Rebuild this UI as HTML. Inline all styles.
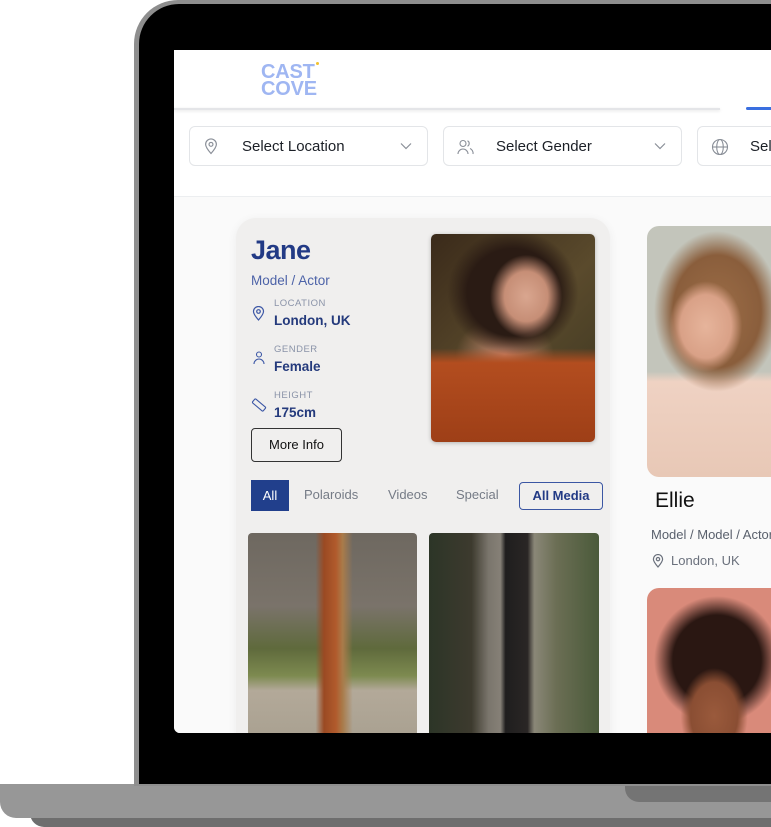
<!DOCTYPE html>
<html><head><meta charset="utf-8"><style>
*{margin:0;padding:0;box-sizing:border-box}
body{width:771px;height:827px;overflow:hidden;background:#fff;position:relative;font-family:"Liberation Sans",Arial,sans-serif}
.a{position:absolute}
.sel{position:absolute;top:126px;height:40px;border:1px solid #e3e5e8;border-radius:6px;background:#fff;font-size:15px;color:#1b1f26}
.sel span{position:absolute;left:52px;top:11px}
.sel svg{position:absolute}
.lbl{font-size:9.5px;color:#8a93a8;letter-spacing:.5px}
.val{font-size:13.5px;color:#243a7c;font-weight:bold}
.tab{position:absolute;top:437px;font-size:13px;color:#757b86}
</style></head><body>
<div class="a" style="left:30px;top:805px;width:741px;height:22px;background:#6e6e6e;border-radius:0 0 0 14px"></div>
<div class="a" style="left:0;top:784px;width:771px;height:34px;background:#979797;border-radius:0 0 0 16px"></div>
<div class="a" style="left:625px;top:784px;width:146px;height:18px;background:#747474;border-radius:0 0 0 14px"></div>
<div class="a" style="left:134px;top:0;width:660px;height:786px;background:#8e8e8e;border-radius:44px 0 0 0"></div>
<div class="a" style="left:139px;top:4px;width:650px;height:780px;background:#000;border-radius:40px 0 0 0"></div>
<div class="a" style="left:174px;top:50px;width:597px;height:683px;background:#fff;overflow:hidden;border-radius:0 0 0 6px">
  <div class="a" style="left:0;top:58px;width:546px;height:2px;background:#e4e5e8;box-shadow:0 1px 3px rgba(0,0,0,.12)"></div>
  <div class="a" style="left:572px;top:57px;width:30px;height:3px;background:#3a6fe0;border-radius:2px"></div>
  <div class="a" style="left:87px;top:14px;font-size:20px;font-weight:bold;line-height:17px;color:#9fb6f2;letter-spacing:-.2px">CAST<br>COVE</div>
  <div class="a" style="left:142px;top:12px;width:3px;height:3px;background:#f2c12e;border-radius:50%"></div>
  <div class="a" style="left:0;top:146px;width:597px;height:1px;background:#eceef0"></div>
  <div class="a" style="left:0;top:147px;width:597px;height:540px;background:#fafafa"></div>
  <div class="a" style="left:62px;top:168px;width:374px;height:540px;background:#f0efee;border-radius:20px;box-shadow:0 2px 10px rgba(0,0,0,.06)"></div>
  <div class="a" style="left:77px;top:185px;font-size:27px;font-weight:bold;color:#223a85;letter-spacing:-.5px">Jane</div>
  <div class="a" style="left:77px;top:223px;font-size:13.5px;color:#4d63a8">Model / Actor</div>
  <svg class="a" style="left:78px;top:256px" width="13" height="15" viewBox="0 0 13 15"><path d="M6.5 14C3 10 1.5 7.5 1.5 5.5a5 5 0 0 1 10 0c0 2-1.5 4.5-5 8.5z" fill="none" stroke="#3d58a6" stroke-width="1.2"/><circle cx="6.5" cy="5.5" r="1.8" fill="none" stroke="#3d58a6" stroke-width="1.2"/></svg>
  <div class="a lbl" style="left:100px;top:248px">LOCATION</div>
  <div class="a val" style="left:100px;top:263px">London, UK</div>
  <svg class="a" style="left:79px;top:301px" width="12" height="14" viewBox="0 0 12 14"><circle cx="6" cy="3.5" r="2.5" fill="none" stroke="#3d58a6" stroke-width="1.1"/><path d="M1 13a5 5 0 0 1 10 0" fill="none" stroke="#3d58a6" stroke-width="1.1"/></svg>
  <div class="a lbl" style="left:100px;top:294px">GENDER</div>
  <div class="a val" style="left:100px;top:309px">Female</div>
  <svg class="a" style="left:77px;top:347px" width="16" height="16" viewBox="0 0 16 16"><rect x="1" y="5.5" width="14" height="5" rx="1" transform="rotate(40 8 8)" fill="none" stroke="#3d58a6" stroke-width="1.1"/></svg>
  <div class="a lbl" style="left:100px;top:340px">HEIGHT</div>
  <div class="a val" style="left:100px;top:355px">175cm</div>
  <div class="a" style="left:77px;top:378px;width:91px;height:34px;border:1.3px solid #333;border-radius:4px;font-size:13px;color:#111;text-align:center;line-height:31px">More Info</div>
  <div class="a" style="left:257px;top:184px;width:164px;height:208px;border-radius:5px;background:radial-gradient(ellipse 22% 20% at 58% 30%,#d9a68f 0,#c68e76 60%,transparent 100%),radial-gradient(ellipse 40% 30% at 50% 28%,#2a1b14 0,#2a1b14 70%,transparent 100%),linear-gradient(180deg,transparent 55%,#b34d1f 62%,#9e3f17 100%),radial-gradient(ellipse 30% 18% at 45% 58%,#c88b73 0,transparent 100%),linear-gradient(135deg,#3a2a1a,#5a4a2c 50%,#3a3520);box-shadow:0 1px 4px rgba(0,0,0,.25)"></div>
  <div class="a" style="left:77px;top:430px;width:38px;height:31px;background:#213f8c;color:#fff;font-size:13px;text-align:center;line-height:31px">All</div>
  <div class="tab" style="left:130px">Polaroids</div>
  <div class="tab" style="left:214px">Videos</div>
  <div class="tab" style="left:282px">Special</div>
  <div class="a" style="left:345px;top:432px;width:84px;height:28px;border:1.3px solid #3b56a3;border-radius:4px;color:#223a85;font-weight:bold;font-size:13px;text-align:center;line-height:25px">All Media</div>
  <div class="a" style="left:74px;top:483px;width:169px;height:210px;border-radius:4px;background:linear-gradient(90deg,transparent 40%,#9a4a23 45%,#b15a2c 52%,#a97b4a 56%,transparent 62%),linear-gradient(180deg,#6e6860 0,#7a736a 35%,#5f6a3c 55%,#7d8a50 68%,#b3a999 75%,#a8a090 100%)"></div>
  <div class="a" style="left:255px;top:483px;width:170px;height:210px;border-radius:4px;background:linear-gradient(90deg,transparent 42%,#1f1e1e 45%,#2a2625 58%,transparent 62%),linear-gradient(90deg,#2c3527 0,#3d3a2e 25%,#7a756c 35%,#9b958b 55%,#6b6e54 75%,#4a5a3a 100%)"></div>
  <div class="a" style="left:473px;top:176px;width:140px;height:251px;border-radius:12px;background:radial-gradient(ellipse 26% 18% at 42% 40%,#e6b49b 0,#d9a187 70%,transparent 100%),radial-gradient(ellipse 45% 32% at 50% 34%,#9c6d47 0,#8a5e3c 70%,transparent 100%),linear-gradient(180deg,transparent 58%,#efd2c3 62%,#e8c8b6 100%),#c3c5bb"></div>
  <div class="a" style="left:481px;top:439px;font-size:21px;color:#111">Ellie</div>
  <div class="a" style="left:477px;top:477px;font-size:13px;color:#59606c;white-space:nowrap">Model / Model / Actor</div>
  <svg class="a" style="left:478px;top:504px" width="12" height="14" viewBox="0 0 13 15"><path d="M6.5 14C3 10 1.5 7.5 1.5 5.5a5 5 0 0 1 10 0c0 2-1.5 4.5-5 8.5z" fill="none" stroke="#6a707c" stroke-width="1.3"/><circle cx="6.5" cy="5.5" r="1.8" fill="none" stroke="#6a707c" stroke-width="1.3"/></svg>
  <div class="a" style="left:497px;top:503px;font-size:13px;color:#6a707c">London, UK</div>
  <div class="a" style="left:473px;top:538px;width:140px;height:160px;border-radius:12px;background:radial-gradient(ellipse 24% 30% at 48% 80%,#9a5a3c 0,#8a4e33 70%,transparent 100%),radial-gradient(ellipse 45% 40% at 50% 45%,#2a1712 0,#2a1712 70%,transparent 100%),#d98a7a"></div>
</div>
<div class="sel" style="left:189px;width:239px"><svg style="left:14px;top:11px" width="14" height="17" viewBox="0 0 13 15"><path d="M6.5 14C3 10 1.5 7.5 1.5 5.5a5 5 0 0 1 10 0c0 2-1.5 4.5-5 8.5z" fill="none" stroke="#8a8f98" stroke-width="1.1"/><circle cx="6.5" cy="5.5" r="1.8" fill="none" stroke="#8a8f98" stroke-width="1.1"/></svg><span>Select Location</span><svg style="left:210px;top:15px" width="12" height="8" viewBox="0 0 12 8"><path d="M1 1.5l5 5 5-5" fill="none" stroke="#8a8f98" stroke-width="1.2"/></svg></div>
<div class="sel" style="left:443px;width:239px"><svg style="left:13px;top:12px" width="17" height="16" viewBox="0 0 17 16"><circle cx="6" cy="4.5" r="3" fill="none" stroke="#8a8f98" stroke-width="1.1"/><path d="M1 15a5 5 0 0 1 10 0M10.5 1.8a3 3 0 0 1 0 5.4M13 9.5a5 5 0 0 1 3 5.5" fill="none" stroke="#8a8f98" stroke-width="1.1"/></svg><span>Select Gender</span><svg style="left:210px;top:15px" width="12" height="8" viewBox="0 0 12 8"><path d="M1 1.5l5 5 5-5" fill="none" stroke="#8a8f98" stroke-width="1.2"/></svg></div>
<div class="sel" style="left:697px;width:120px"><svg style="left:13px;top:11px" width="18" height="18" viewBox="0 0 18 18"><circle cx="9" cy="9" r="7.5" fill="none" stroke="#8a8f98" stroke-width="1.1"/><ellipse cx="9" cy="9" rx="3.3" ry="7.5" fill="none" stroke="#8a8f98" stroke-width="1.1"/><path d="M1.5 9h15" stroke="#8a8f98" stroke-width="1.1"/></svg><span>Select</span></div>
</body></html>
